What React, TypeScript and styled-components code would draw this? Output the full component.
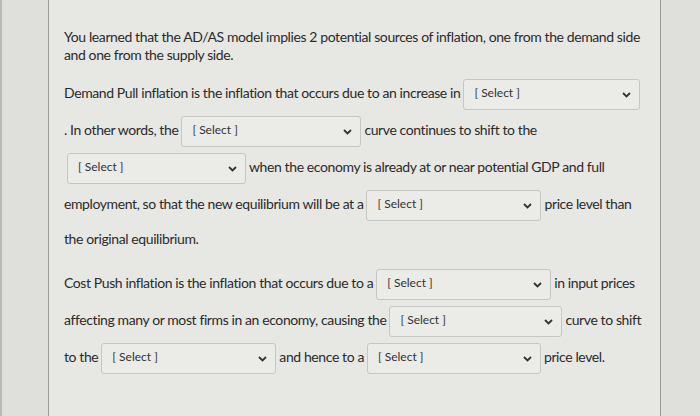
import React, { FC } from 'react';
import styled, { createGlobalStyle } from 'styled-components';

const GlobalStyle = createGlobalStyle`
  html, body {
    margin: 0;
    padding: 0;
    background: #dfdfdb;
  }
  body {
    font-family: Lato, 'Open Sans', sans-serif;
    color: #2b2b2b;
  }
`;

const Page = styled.div`
  width: 700px;
  height: 416px;
  overflow: hidden;
  background: #dfdfdb;
  border-left: 2px solid #b9bab6;
  box-sizing: border-box;
  padding-left: 46px;
`;

const Panel = styled.div`
  width: 613px;
  height: 416px;
  box-sizing: border-box;
  background: #e7e7e4;
  border-left: 1px solid #9c9d99;
  border-right: 1px solid #9c9d99;
  padding: 28px 2px 0 15px;
`;

const Para = styled.p<{ $lh: number; $mt?: number }>`
  margin: ${(p) => p.$mt ?? 0}px 0 0;
  font-size: 14px;
  line-height: ${(p) => p.$lh}px;
  letter-spacing: -0.4px;
  white-space: nowrap;
`;

const Dropdown = styled.span<{ $w: number }>`
  display: inline-flex;
  align-items: center;
  justify-content: space-between;
  box-sizing: border-box;
  width: ${(p) => p.$w}px;
  height: 31px;
  margin: 3px 3px;
  padding: 0 8px 0 10px;
  vertical-align: middle;
  background: #ebebe8;
  border: 1px solid #c6c7c3;
  border-radius: 3px;
  line-height: 1;
  letter-spacing: 0;
`;

const DropdownLabel = styled.span`
  font-size: 12px;
  color: #333;
  margin-top: -3px;
`;

const Chevron: FC = () => (
  <svg width="9" height="6" viewBox="0 0 9 6">
    <path d="M1 1 L4.5 4.5 L8 1" fill="none" stroke="#333" strokeWidth="1.8" />
  </svg>
);

const Select: FC<{ w?: number }> = ({ w = 177 }) => (
  <Dropdown $w={w}>
    <DropdownLabel>[ Select ]</DropdownLabel>
    <Chevron />
  </Dropdown>
);

const App: FC = () => (
  <Page>
    <GlobalStyle />
    <Panel>
      <Para $lh={18}>
        You learned that the AD/AS model implies 2 potential sources of
        inflation, one from the demand side
        <br />
        and one from the supply side.
      </Para>
      <Para $lh={30} $mt={12}>
        Demand Pull inflation is the inflation that occurs due to an increase in
        <Select w={177} />
        <br />
        . In other words, the
        <Select w={180} />
        curve continues to shift to the
        <br />
        <Select w={179} />
        when the economy is already at or near potential GDP and full
        <br />
        employment, so that the new equilibrium will be at a
        <Select w={175} />
        price level than
        <br />
        the original equilibrium.
      </Para>
      <Para $lh={30} $mt={12}>
        Cost Push inflation is the inflation that occurs due to a
        <Select w={175} />
        in input prices
        <br />
        affecting many or most firms in an economy, causing the
        <Select w={173} />
        curve to shift
        <br />
        to the
        <Select w={175} />
        and hence to a
        <Select w={174} />
        price level.
      </Para>
    </Panel>
  </Page>
);

export default App;
